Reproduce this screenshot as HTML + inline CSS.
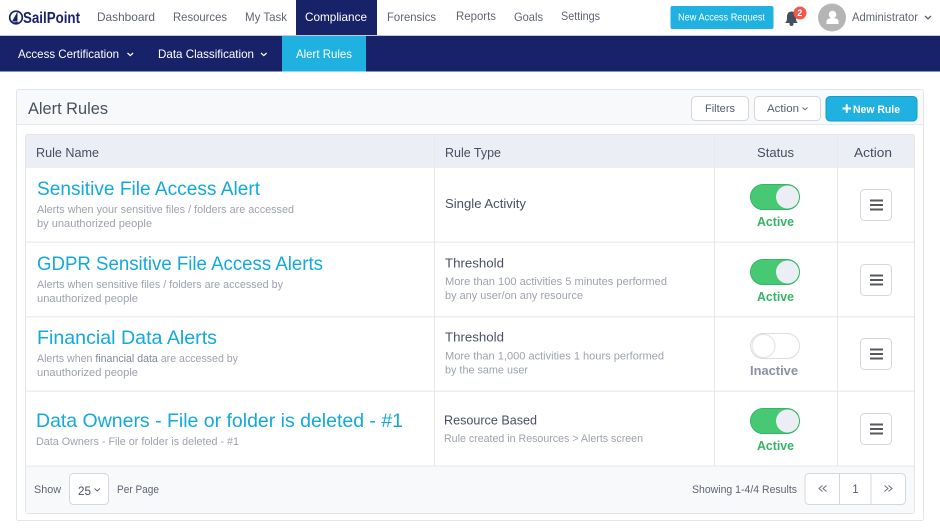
<!DOCTYPE html>
<html><head><meta charset="utf-8"><title>Alert Rules</title>
<style>
html,body{margin:0;padding:0;background:#fff;width:940px;height:529px;overflow:hidden}
svg{display:block}
text{font-family:"Liberation Sans",Arial,sans-serif;font-size:11px;fill:#555c6e}
.nav{font-size:12px;fill:#5f6472}
.w{font-size:12px;fill:#fff}
.th{font-size:12.5px;fill:#474e60}
.lnk{font-size:19.5px;fill:#12a9dc}
.sub{font-size:11px;fill:#9da2af}
.ty{font-size:12.5px;fill:#4a5062}
.on{font-size:12.5px;font-weight:bold;fill:#35b566}
</style></head><body>
<svg width="940" height="529" viewBox="0 0 940 529" xmlns="http://www.w3.org/2000/svg">
<defs>
<g id="tgl"><rect x="750.5" y="0.5" width="49" height="25" rx="12.5" fill="#47c974" stroke="#35b566"/><circle cx="787.5" cy="13" r="11.5" fill="#eceef5"/></g>
<g id="mnu"><rect x="860.5" y="0.5" width="31" height="31" rx="4" fill="#fff" stroke="#d5d7db"/><path d="M870 11.500h13M870 16h13M870 20.500h13" stroke="#55585f" stroke-width="1.900"/></g>
</defs>
<rect width="940" height="529" fill="#fff"/>

<!-- top nav -->
<circle cx="16" cy="17.500" r="6.300" fill="none" stroke="#182268" stroke-width="1.700"/>
<path d="M17.500 11.500L12 21.500h5.500zM17 23l-6-.6 8-.6z" fill="#182268"/>
<text x="23" y="23" style="font-size:16px;font-weight:bold;fill:#182268" textLength="57" lengthAdjust="spacingAndGlyphs">SailPoint</text>
<text class="nav" x="97" y="21" textLength="58" lengthAdjust="spacingAndGlyphs">Dashboard</text>
<text class="nav" x="173" y="21" textLength="54" lengthAdjust="spacingAndGlyphs">Resources</text>
<text class="nav" x="245" y="21" textLength="42" lengthAdjust="spacingAndGlyphs">My Task</text>
<rect x="296" y="0" width="81" height="35" fill="#182268"/>
<text class="w" x="305" y="21" textLength="62" lengthAdjust="spacingAndGlyphs">Compliance</text>
<text class="nav" x="387" y="21" textLength="49" lengthAdjust="spacingAndGlyphs">Forensics</text>
<text class="nav" x="456" y="20" textLength="40" lengthAdjust="spacingAndGlyphs">Reports</text>
<text class="nav" x="514" y="21" textLength="29" lengthAdjust="spacingAndGlyphs">Goals</text>
<text class="nav" x="561" y="20" textLength="39" lengthAdjust="spacingAndGlyphs">Settings</text>
<rect x="670.500" y="6" width="103" height="23" rx="2" fill="#1fb2e0"/>
<text x="678" y="20.500" style="font-size:10px;fill:#fff" textLength="87" lengthAdjust="spacingAndGlyphs">New Access Request</text>
<path d="M785 23c2-1.500 2-3.500 2-6.500 0-3 1.800-5 4.500-5s4.500 2 4.500 5c0 3 0 5 2 6.500z" fill="#474e60"/>
<circle cx="791.500" cy="24" r="2" fill="#474e60"/>
<circle cx="800" cy="13" r="6.500" fill="#f2574a"/>
<text x="797.300" y="16.200" style="font-size:9px;font-weight:bold;fill:#fff">2</text>
<circle cx="832" cy="17.500" r="14" fill="#b5b5b5"/>
<circle cx="832.500" cy="14.500" r="3.800" fill="#fff"/>
<path d="M826.500 24v-2.500c0-2.500 2.500-3.500 6-3.500s6 1 6 3.500V24z" fill="#fff"/>
<text class="nav" x="852" y="21" textLength="66" lengthAdjust="spacingAndGlyphs">Administrator</text>
<path d="M925 16l3 2.800 3-2.800" fill="none" stroke="#555c6e" stroke-width="1.300"/>

<!-- sub nav -->
<rect x="0" y="35" width="940" height="1" fill="#c6c7d3"/>
<rect x="0" y="36" width="940" height="35.500" fill="#182268"/>
<text class="w" x="18" y="58" textLength="101" lengthAdjust="spacingAndGlyphs">Access Certification</text>
<path d="M127.500 53l2.800 2.600 2.800-2.600" fill="none" stroke="#fff" stroke-width="1.200"/>
<text class="w" x="158" y="58" textLength="96" lengthAdjust="spacingAndGlyphs">Data Classification</text>
<path d="M261 53l2.800 2.600 2.800-2.600" fill="none" stroke="#fff" stroke-width="1.200"/>
<rect x="282" y="36" width="84" height="35.500" fill="#1fb2e0"/>
<text class="w" x="296" y="58" textLength="56" lengthAdjust="spacingAndGlyphs">Alert Rules</text>

<!-- panel -->
<rect x="16.500" y="89.500" width="907" height="431" rx="2" fill="#fff" stroke="#e3e5e8"/>
<rect x="17" y="90" width="906" height="34" fill="#f8f9fb"/>
<rect x="17" y="124" width="906" height="1" fill="#e6e8ec"/>
<text x="28" y="114" style="font-size:16.500px;fill:#4a5062" textLength="80" lengthAdjust="spacingAndGlyphs">Alert Rules</text>
<rect x="691.500" y="96.500" width="57" height="24" rx="4" fill="#fff" stroke="#d5d7db"/>
<text x="705" y="112" style="font-size:11px;fill:#555c6e" textLength="30" lengthAdjust="spacingAndGlyphs">Filters</text>
<rect x="754.500" y="96.500" width="66" height="24" rx="4" fill="#fff" stroke="#d5d7db"/>
<text x="767" y="112" style="font-size:11px;fill:#555c6e" textLength="32" lengthAdjust="spacingAndGlyphs">Action</text>
<path d="M802.500 107.500l2.500 2.300 2.500-2.300" fill="none" stroke="#555c6e" stroke-width=".9"/>
<rect x="826" y="96.500" width="91" height="24.500" rx="4" fill="#1fb2e0" stroke="#129ccb"/>
<path d="M842.500 108.500h8.500M846.750 104.300v8.500" stroke="#fff" stroke-width="1.900"/>
<text x="853" y="113" style="font-size:11px;font-weight:bold;fill:#fff" textLength="47" lengthAdjust="spacingAndGlyphs">New Rule</text>

<!-- table -->
<rect x="25.500" y="134.500" width="889" height="379" rx="2" fill="#fff" stroke="#e3e5e8"/>
<rect x="26" y="135" width="888" height="33" fill="#ebeef5"/>
<rect x="26" y="467" width="888" height="46" fill="#f8f9fb"/>
<rect x="26" y="241.500" width="888" height="1.500" fill="#eceef2"/>
<rect x="26" y="316" width="888" height="1.500" fill="#eceef2"/>
<rect x="26" y="390.500" width="888" height="1.500" fill="#eceef2"/>
<rect x="26" y="465.500" width="888" height="1.500" fill="#eceef2"/>
<path d="M434.500 135V466M714.500 135V466M837.500 135V466" stroke="#e6e8ec"/>

<text class="th" x="36" y="157" textLength="63" lengthAdjust="spacingAndGlyphs">Rule Name</text>
<text class="th" x="445" y="157" textLength="56" lengthAdjust="spacingAndGlyphs">Rule Type</text>
<text class="th" x="757" y="157" textLength="37" lengthAdjust="spacingAndGlyphs">Status</text>
<text class="th" x="854" y="157" textLength="38" lengthAdjust="spacingAndGlyphs">Action</text>

<text class="lnk" x="37" y="195" textLength="223" lengthAdjust="spacingAndGlyphs">Sensitive File Access Alert</text>
<text class="sub" x="37" y="213" textLength="257" lengthAdjust="spacingAndGlyphs">Alerts when your sensitive files / folders are accessed</text>
<text class="sub" x="37" y="227" textLength="115" lengthAdjust="spacingAndGlyphs">by unauthorized people</text>
<text class="lnk" x="37" y="270" textLength="286" lengthAdjust="spacingAndGlyphs">GDPR Sensitive File Access Alerts</text>
<text class="sub" x="37" y="288" textLength="246" lengthAdjust="spacingAndGlyphs">Alerts when sensitive files / folders are accessed by</text>
<text class="sub" x="37" y="302" textLength="101" lengthAdjust="spacingAndGlyphs">unauthorized people</text>
<text class="lnk" x="37" y="344" textLength="180" lengthAdjust="spacingAndGlyphs">Financial Data Alerts</text>
<text class="sub" x="37" y="362" textLength="201" lengthAdjust="spacingAndGlyphs">Alerts when <tspan style="fill:#80869a">financial data</tspan> are accessed by</text>
<text class="sub" x="37" y="376" textLength="101" lengthAdjust="spacingAndGlyphs">unauthorized people</text>
<text class="lnk" x="36" y="427" textLength="367" lengthAdjust="spacingAndGlyphs">Data Owners - File or folder is deleted - #1</text>
<text class="sub" x="36" y="445" textLength="203" lengthAdjust="spacingAndGlyphs">Data Owners - File or folder is deleted - #1</text>

<text class="ty" x="445" y="208" textLength="81" lengthAdjust="spacingAndGlyphs">Single Activity</text>
<text class="ty" x="445" y="267.500" textLength="59" lengthAdjust="spacingAndGlyphs">Threshold</text>
<text class="sub" x="445" y="285" textLength="222" lengthAdjust="spacingAndGlyphs">More than 100 activities 5 minutes performed</text>
<text class="sub" x="445" y="299" textLength="138" lengthAdjust="spacingAndGlyphs">by any user/on any resource</text>
<text class="ty" x="445" y="341.500" textLength="59" lengthAdjust="spacingAndGlyphs">Threshold</text>
<text class="sub" x="445" y="359.500" textLength="219" lengthAdjust="spacingAndGlyphs">More than 1,000 activities 1 hours performed</text>
<text class="sub" x="445" y="373.500" textLength="83" lengthAdjust="spacingAndGlyphs">by the same user</text>
<text class="ty" x="444" y="424.500" textLength="93" lengthAdjust="spacingAndGlyphs">Resource Based</text>
<text class="sub" x="444" y="442" textLength="199" lengthAdjust="spacingAndGlyphs">Rule created in Resources &gt; Alerts screen</text>

<use href="#tgl" y="184"/>
<text class="on" x="757" y="226" textLength="37" lengthAdjust="spacingAndGlyphs">Active</text>
<use href="#tgl" y="259"/>
<text class="on" x="757" y="301" textLength="37" lengthAdjust="spacingAndGlyphs">Active</text>
<rect x="750.500" y="333.500" width="49" height="25" rx="12.500" fill="#fff" stroke="#dcdde0"/>
<circle cx="763.500" cy="346" r="11.500" fill="#fff" stroke="#e0e0e0"/>
<text class="on" x="750" y="375" style="fill:#8b90a2" textLength="48" lengthAdjust="spacingAndGlyphs">Inactive</text>
<use href="#tgl" y="408"/>
<text class="on" x="757" y="450" textLength="37" lengthAdjust="spacingAndGlyphs">Active</text>

<use href="#mnu" y="189"/>
<use href="#mnu" y="264"/>
<use href="#mnu" y="338"/>
<use href="#mnu" y="413"/>

<!-- footer -->
<text x="34" y="493" style="font-size:11px;fill:#5f6472" textLength="27" lengthAdjust="spacingAndGlyphs">Show</text>
<rect x="69.500" y="473.500" width="39" height="31" rx="4" fill="#fff" stroke="#d5d7db"/>
<text x="78" y="495" style="font-size:12px;fill:#4a5062" textLength="13" lengthAdjust="spacingAndGlyphs">25</text>
<path d="M94.500 488.500l2.700 2.500 2.700-2.500" fill="none" stroke="#555c6e" stroke-width=".9"/>
<text x="117" y="493" style="font-size:11px;fill:#5f6472" textLength="42" lengthAdjust="spacingAndGlyphs">Per Page</text>
<text x="692" y="493" style="font-size:11px;fill:#5f6472" textLength="105" lengthAdjust="spacingAndGlyphs">Showing 1-4/4 Results</text>
<rect x="805" y="473.500" width="100.500" height="31" rx="4" fill="#fff" stroke="#d5d7db"/>
<path d="M839.500 474V504M871 474V504" stroke="#d5d7db"/>
<path d="M822.500 485.500l-3.500 3 3.500 3M826.500 485.500l-3.500 3 3.500 3M884.500 485.500l3.500 3-3.500 3M888.500 485.500l3.500 3-3.500 3" fill="none" stroke="#6a6f7d" stroke-width="1"/>
<text x="852.300" y="493" style="font-size:11.500px;fill:#555c6e">1</text>
</svg>
</body></html>
